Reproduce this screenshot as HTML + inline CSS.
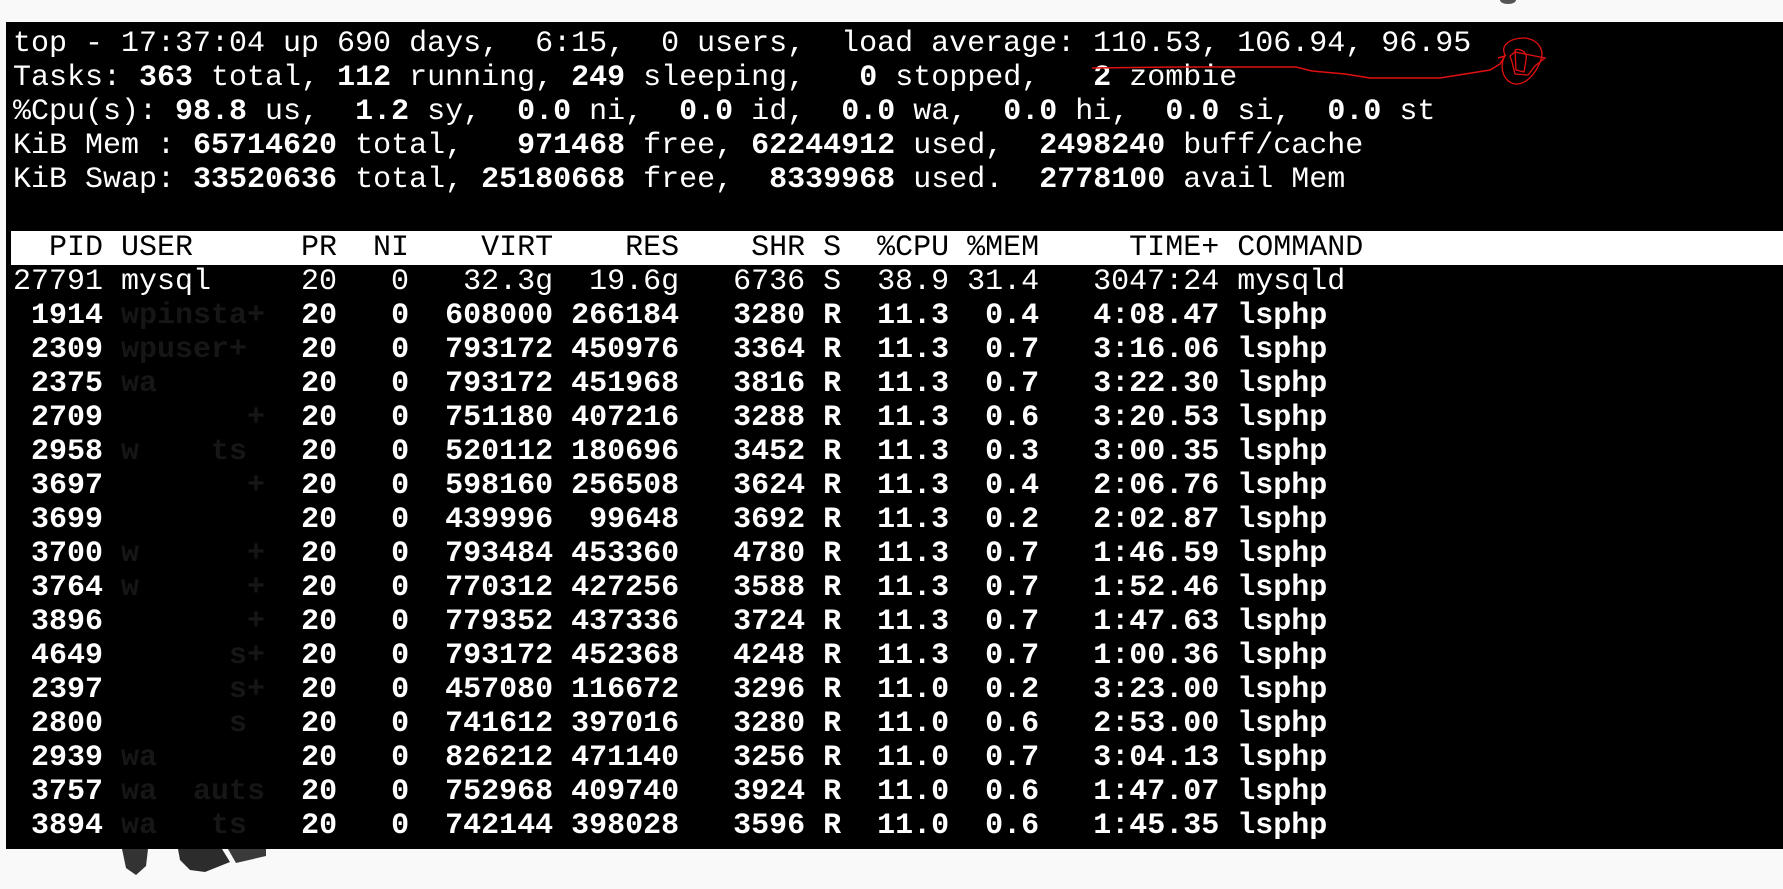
<!DOCTYPE html>
<html><head><meta charset="utf-8"><style>
html,body{margin:0;padding:0;background:#f9f9f9;width:1783px;height:889px;overflow:hidden;position:relative}
#term{position:absolute;left:6px;top:22px;width:1777px;height:827px;background:#000}
#hdr{position:absolute;left:11px;top:231px;width:1772px;height:34px;background:#fff}
pre{position:absolute;left:13px;top:27px;margin:0;font-family:"Liberation Mono",monospace;font-size:30px;line-height:34px;color:#fff;white-space:pre}
b{font-weight:bold}
.h{color:#000}
.u{color:#161616}
</style></head><body>
<div id="term"></div>
<div id="hdr"></div>
<pre>top - 17:37:04 up 690 days,  6:15,  0 users,  load average: 110.53, 106.94, 96.95
Tasks: <b>363</b> total, <b>112</b> running, <b>249</b> sleeping,   <b>0</b> stopped,   <b>2</b> zombie
%Cpu(s): <b>98.8</b> us,  <b>1.2</b> sy,  <b>0.0</b> ni,  <b>0.0</b> id,  <b>0.0</b> wa,  <b>0.0</b> hi,  <b>0.0</b> si,  <b>0.0</b> st
KiB Mem : <b>65714620</b> total,   <b>971468</b> free, <b>62244912</b> used,  <b>2498240</b> buff/cache
KiB Swap: <b>33520636</b> total, <b>25180668</b> free,  <b>8339968</b> used.  <b>2778100</b> avail Mem

<span class="h">  PID USER      PR  NI    VIRT    RES    SHR S  %CPU %MEM     TIME+ COMMAND</span>
27791 mysql     20   0   32.3g  19.6g   6736 S  38.9 31.4   3047:24 mysqld
<b> 1914 <span class="u">wpinsta+</span>  20   0  608000 266184   3280 R  11.3  0.4   4:08.47 lsphp
 2309 <span class="u">wpuser+ </span>  20   0  793172 450976   3364 R  11.3  0.7   3:16.06 lsphp
 2375 <span class="u">wa      </span>  20   0  793172 451968   3816 R  11.3  0.7   3:22.30 lsphp
 2709 <span class="u">       +</span>  20   0  751180 407216   3288 R  11.3  0.6   3:20.53 lsphp
 2958 <span class="u">w    ts </span>  20   0  520112 180696   3452 R  11.3  0.3   3:00.35 lsphp
 3697 <span class="u">       +</span>  20   0  598160 256508   3624 R  11.3  0.4   2:06.76 lsphp
 3699 <span class="u">        </span>  20   0  439996  99648   3692 R  11.3  0.2   2:02.87 lsphp
 3700 <span class="u">w      +</span>  20   0  793484 453360   4780 R  11.3  0.7   1:46.59 lsphp
 3764 <span class="u">w      +</span>  20   0  770312 427256   3588 R  11.3  0.7   1:52.46 lsphp
 3896 <span class="u">       +</span>  20   0  779352 437336   3724 R  11.3  0.7   1:47.63 lsphp
 4649 <span class="u">      s+</span>  20   0  793172 452368   4248 R  11.3  0.7   1:00.36 lsphp
 2397 <span class="u">      s+</span>  20   0  457080 116672   3296 R  11.0  0.2   3:23.00 lsphp
 2800 <span class="u">      s </span>  20   0  741612 397016   3280 R  11.0  0.6   2:53.00 lsphp
 2939 <span class="u">wa      </span>  20   0  826212 471140   3256 R  11.0  0.7   3:04.13 lsphp
 3757 <span class="u">wa  auts</span>  20   0  752968 409740   3924 R  11.0  0.6   1:47.07 lsphp
 3894 <span class="u">wa   ts </span>  20   0  742144 398028   3596 R  11.0  0.6   1:45.35 lsphp</b></pre>
<svg width="1783" height="889" style="position:absolute;left:0;top:0" xmlns="http://www.w3.org/2000/svg">
<path d="M1092 68 L1180 67 L1296 67 L1312 71 L1345 74 L1370 78 L1440 78 L1465 74 L1490 70 L1500 64 L1505 56 L1498 58" fill="none" stroke="#e01010" stroke-width="1.5"/>
<path d="M1505 55 C1500 45 1510 38 1525 38 C1540 40 1545 52 1540 62 C1535 75 1525 85 1515 84 C1505 82 1498 70 1505 55 Z M1510 56 L1515 52 L1530 55 L1545 58 L1535 66 L1528 75 L1515 74 L1512 62 Z M1515 50 C1520 48 1528 52 1526 60 L1524 72 L1516 70 Z" fill="none" stroke="#e01010" stroke-width="1.3"/>
<path d="M122 849 L148 849 L146 866 L136 875 L126 868 Z" fill="#333"/>
<path d="M178 849 L222 849 L230 862 L205 872 L190 870 L180 860 Z" fill="#2c2c2c"/>
<path d="M228 849 L266 849 L266 856 L236 863 Z" fill="#3a3a3a"/>
<ellipse cx="1508" cy="0" rx="8" ry="4" fill="#555"/>
</svg>
</body></html>
